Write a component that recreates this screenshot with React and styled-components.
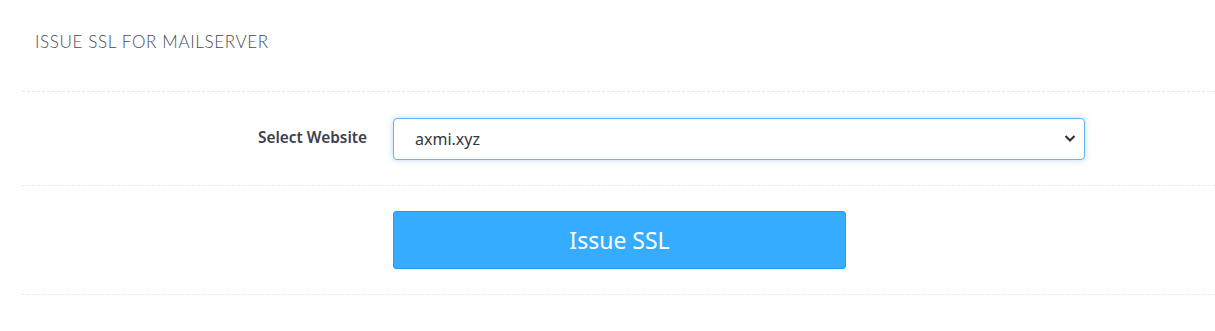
import React from "react";
import styled, { createGlobalStyle } from "styled-components";

const Global = createGlobalStyle`
  html, body { margin: 0; padding: 0; background: #ffffff; }
  * { box-sizing: border-box; }
`;

const Page = styled.div`
  padding-left: 22px;
  width: 1215px;
`;

const Header = styled.div`
  height: 92px;
  padding: 31px 0 0 13px;
  border-bottom: 1px dashed #e6e6e6;
`;

const Title = styled.h2`
  margin: 0;
  font-family: "Lato", "Liberation Sans", sans-serif;
  font-weight: 300;
  font-size: 17px;
  line-height: 22px;
  color: #4a4a55;
  letter-spacing: 0.65px;
`;

const FormRow = styled.div`
  display: flex;
  align-items: flex-start;
  height: ${(p) => p.$h}px;
  padding-top: ${(p) => p.$pt}px;
  border-bottom: 1px dashed ${(p) => p.$line};
`;

const Label = styled.label`
  width: 345px;
  text-align: right;
  padding-top: 9px;
  font-family: "Noto Sans", "Open Sans", sans-serif;
  font-weight: 600;
  font-size: 15.4px;
  line-height: 22px;
  color: #3c404d;
`;

const Field = styled.div`
  position: relative;
  margin-left: 26px;
  width: 692px;
`;

const Select = styled.select`
  appearance: none;
  -webkit-appearance: none;
  width: 100%;
  height: 42px;
  padding: 0 40px 0 21px;
  font-family: "Noto Sans", "Open Sans", sans-serif;
  font-size: 16px;
  color: #333842;
  background: #ffffff;
  border: 1px solid #66b3f0;
  border-radius: 4px;
  box-shadow: 0 0 6px rgba(102, 175, 233, 0.45);
  outline: none;
`;

const Chevron = styled.svg`
  position: absolute;
  right: 9px;
  top: 16px;
  pointer-events: none;
`;

const Spacer = styled.div`
  width: 371px;
  flex: none;
`;

const Button = styled.button`
  width: 453px;
  height: 58px;
  background: #35acff;
  border: 1px solid #1f9cf3;
  border-radius: 3px;
  color: #ffffff;
  font-family: "Noto Sans", "Open Sans", sans-serif;
  font-size: 23px;
  line-height: 1;
  cursor: pointer;
`;

export default function App() {
  return (
    <Page>
      <Global />
      <Header>
        <Title>ISSUE SSL FOR MAILSERVER</Title>
      </Header>
      <FormRow $h={94} $pt={26} $line="#e8e8e8">
        <Label>Select Website</Label>
        <Field>
          <Select defaultValue="axmi.xyz">
            <option>axmi.xyz</option>
          </Select>
          <Chevron width="12" height="9" viewBox="0 0 12 9">
            <path d="M1.5 2 L6 6.5 L10.5 2" fill="none" stroke="#333" strokeWidth="2.2" />
          </Chevron>
        </Field>
      </FormRow>
      <FormRow $h={109} $pt={25} $line="#dfecf4">
        <Spacer />
        <Button>Issue SSL</Button>
      </FormRow>
    </Page>
  );
}
